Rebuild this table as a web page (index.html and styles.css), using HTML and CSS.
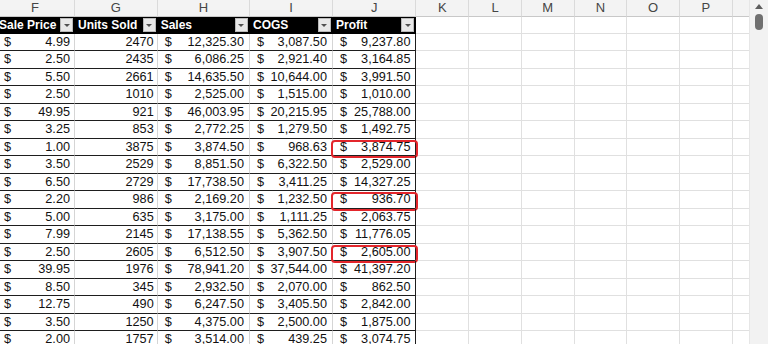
FILE: index.html
```html
<!DOCTYPE html>
<html>
<head>
<meta charset="utf-8">
<link rel="stylesheet" href="styles.css">
</head>
<body>
<div class="sheet">
  <div class="grid">
    <div class="row colhead">
      <div class="ch">F</div><div class="ch">G</div><div class="ch">H</div><div class="ch">I</div><div class="ch">J</div>
      <div class="ch">K</div><div class="ch">L</div><div class="ch">M</div><div class="ch">N</div><div class="ch">O</div><div class="ch">P</div><div class="ch last"></div>
    </div>
    <div class="row thead">
      <div class="th"><span>Sale Price</span><span class="btn"><i></i></span></div>
      <div class="th"><span>Units Sold</span><span class="btn"><i></i></span></div>
      <div class="th"><span>Sales</span><span class="btn"><i></i></span></div>
      <div class="th"><span>COGS</span><span class="btn"><i></i></span></div>
      <div class="th"><span>Profit</span><span class="btn"><i></i></span></div>
      <div class="e"></div><div class="e"></div><div class="e"></div><div class="e"></div><div class="e"></div><div class="e"></div><div class="e last"></div>
    </div>
    <div id="rows"></div>
  </div>
  <div class="scrollbar"><span class="arrow"></span><span class="thumb"></span></div>
</div>
<script src="app.js"></script>
</body>
</html>
```
FILE: app.js
```js
const data = [
  ["4.99","2470","12,325.30","3,087.50","9,237.80"],
  ["2.50","2435","6,086.25","2,921.40","3,164.85"],
  ["5.50","2661","14,635.50","10,644.00","3,991.50"],
  ["2.50","1010","2,525.00","1,515.00","1,010.00"],
  ["49.95","921","46,003.95","20,215.95","25,788.00"],
  ["3.25","853","2,772.25","1,279.50","1,492.75"],
  ["1.00","3875","3,874.50","968.63","3,874.75",1],
  ["3.50","2529","8,851.50","6,322.50","2,529.00"],
  ["6.50","2729","17,738.50","3,411.25","14,327.25"],
  ["2.20","986","2,169.20","1,232.50","936.70",1],
  ["5.00","635","3,175.00","1,111.25","2,063.75"],
  ["7.99","2145","17,138.55","5,362.50","11,776.05"],
  ["2.50","2605","6,512.50","3,907.50","2,605.00",1],
  ["39.95","1976","78,941.20","37,544.00","41,397.20"],
  ["8.50","345","2,932.50","2,070.00","862.50"],
  ["12.75","490","6,247.50","3,405.50","2,842.00"],
  ["3.50","1250","4,375.00","2,500.00","1,875.00"],
  ["2.00","1757","3,514.00","439.25","3,074.75"]
];
const host = document.getElementById("rows");
let html = "";
for (const r of data) {
  const acc = (v, cls) => `<div class="c acc ${cls||""}"><span>$</span><span>${v}</span></div>`;
  html += `<div class="row drow">` +
    acc(r[0], "f") +
    `<div class="c num">${r[1]}</div>` +
    acc(r[2]) + acc(r[3]) +
    `<div class="c acc j"><span>$</span><span>${r[4]}</span>${r[5] ? '<span class="mark"></span>' : ''}</div>` +
    `<div class="e"></div><div class="e"></div><div class="e"></div><div class="e"></div><div class="e"></div><div class="e"></div><div class="e last"></div>` +
    `</div>`;
}
host.innerHTML = html;
```
FILE: styles.css
```css
html, body {
  margin: 0;
  padding: 0;
}
body {
  width: 768px;
  height: 344px;
  overflow: hidden;
  background: #ffffff;
  font-family: "Liberation Sans", Arial, sans-serif;
}
.sheet {
  display: flex;
  height: 344px;
  overflow: hidden;
}
.grid {
  flex: none;
  width: 753px;
  margin-left: -4px;
}
.row {
  display: grid;
  grid-template-columns: 79px 82.7px 92.3px 83px 83.5px repeat(6, 52.7px) 1fr;
}
.row > div {
  box-sizing: border-box;
  min-width: 0;
}
.colhead {
  height: 17px;
  background: #f3f3f3;
}
.ch {
  border-right: 1px solid #dadada;
  border-bottom: 1px solid #c8c8c8;
  text-align: center;
  font-size: 13px;
  line-height: 16px;
  color: #454545;
}
.ch.last, .e.last {
  border-right: none;
}
.thead {
  height: 16.5px;
}
.th {
  background: #000000;
  color: #ffffff;
  font-weight: bold;
  font-size: 12px;
  display: flex;
  align-items: center;
  justify-content: space-between;
  padding-left: 3px;
  white-space: nowrap;
}
.btn {
  flex: none;
  width: 13px;
  height: 14px;
  margin-right: 2px;
  box-sizing: border-box;
  background: #e8e8e8;
  border: 1px solid #b9b9b9;
  display: flex;
  align-items: center;
  justify-content: center;
}
.btn i {
  display: block;
  width: 0;
  height: 0;
  border-left: 3px solid transparent;
  border-right: 3px solid transparent;
  border-top: 3px solid #505050;
}
.e {
  border-right: 1px solid #e0e0e0;
  border-bottom: 1px solid #e0e0e0;
}
.drow {
  height: 17.5px;
}
.c {
  border-bottom: 1px solid #1e1e1e;
  border-right: 1px solid #d5d5d5;
  font-size: 12.7px;
  color: #111111;
  display: flex;
  align-items: center;
  white-space: nowrap;
}
.acc {
  justify-content: space-between;
  padding: 0 5px 0 7px;
}
.acc.f {
  padding-left: 8px;
  padding-right: 4px;
}
.num {
  justify-content: flex-end;
  padding-right: 3px;
}
.j {
  border-right: 1px solid #1e1e1e;
  position: relative;
}
.mark {
  position: absolute;
  top: 1px;
  left: -2px;
  right: -3px;
  bottom: -3px;
  border: 2px solid #e3262c;
  border-radius: 4px;
}
.scrollbar {
  flex: none;
  width: 19px;
  box-sizing: border-box;
  background: #f2f2f2;
  border-left: 1px solid #e6e6e6;
  display: flex;
  flex-direction: column;
  align-items: center;
  padding-top: 4px;
}
.arrow {
  width: 0;
  height: 0;
  border-left: 4px solid transparent;
  border-right: 4px solid transparent;
  border-bottom: 5px solid #5e5e5e;
}
.thumb {
  margin-top: 5px;
  width: 8px;
  height: 16px;
  border-radius: 4px;
  background: #707070;
}
```
